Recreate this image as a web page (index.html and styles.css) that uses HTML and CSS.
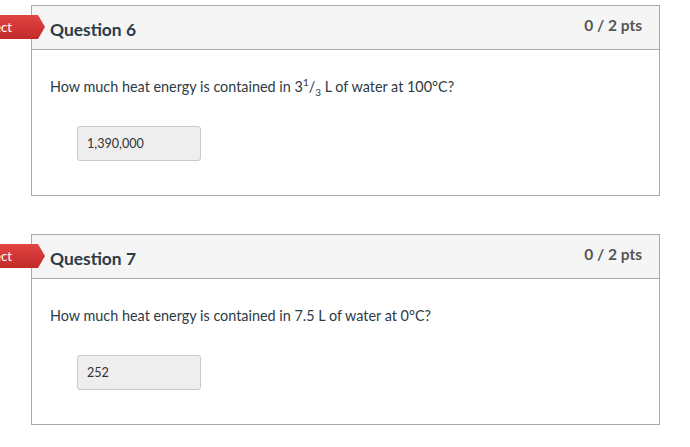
FILE: index.html
```html
<!DOCTYPE html>
<html>
<head>
<meta charset="utf-8">
<link rel="stylesheet" href="styles.css">
</head>
<body>
<div class="quiz">
  <div class="question">
    <div class="badge">Incorrect</div>
    <div class="q-header">
      <span class="q-name">Question 6</span>
      <span class="q-points">0 / 2 pts</span>
    </div>
    <div class="q-body">
      <p class="q-text">How much heat energy is contained in 3<sup>1</sup>/<sub>3</sub> L of water at 100°C?</p>
      <div class="answer">1,390,000</div>
    </div>
  </div>
  <div class="question">
    <div class="badge">Incorrect</div>
    <div class="q-header">
      <span class="q-name">Question 7</span>
      <span class="q-points">0 / 2 pts</span>
    </div>
    <div class="q-body">
      <p class="q-text">How much heat energy is contained in 7.5 L of water at 0°C?</p>
      <div class="answer">252</div>
    </div>
  </div>
</div>
</body>
</html>
```

FILE: styles.css
```css
html, body {
  margin: 0;
  padding: 0;
  background: #ffffff;
}
body {
  font-family: Lato, "Liberation Sans", sans-serif;
  color: #2d3b45;
}
.quiz {
  display: flex;
  flex-direction: column;
  gap: 38px;
  padding: 5px 0 0 31px;
  width: 629px;
}
.question {
  position: relative;
  border: 1px solid #aaaaaa;
  background: #ffffff;
}
.badge {
  position: absolute;
  top: 9px;
  left: -104px;
  width: 117px;
  height: 24px;
  box-sizing: border-box;
  padding-right: 33px;
  text-align: right;
  line-height: 24px;
  font-size: 13px;
  color: #ffffff;
  background: linear-gradient(#e24542, #c22a2a);
  clip-path: polygon(0 0, calc(100% - 7px) 0, 100% 50%, calc(100% - 7px) 100%, 0 100%);
}
.q-header {
  display: flex;
  justify-content: space-between;
  align-items: flex-start;
  height: 44px;
  box-sizing: border-box;
  padding: 12px 17px 0 18px;
  background: #f5f5f5;
  border-bottom: 1px solid #aaaaaa;
}
.q-name {
  font-size: 17.4px;
  font-weight: bold;
  line-height: 24px;
  color: #2d3b45;
}
.q-points {
  font-size: 15.5px;
  font-weight: bold;
  line-height: 16px;
  margin-top: -1px;
  color: #565656;
}
.q-body {
  padding: 27px 18px 34px;
}
.q-text {
  margin: 0;
  font-size: 14.4px;
  line-height: 20px;
  color: #2d3b45;
}
.q-text sup, .q-text sub {
  font-size: 10px;
  line-height: 0;
}
.answer {
  margin: 29px 0 0 27px;
  width: 124px;
  height: 35px;
  box-sizing: border-box;
  padding: 0 9px;
  line-height: 33px;
  font-size: 12.6px;
  color: #333333;
  background: #eeeeee;
  border: 1px solid #c9c9c9;
  border-radius: 3px;
}
```
